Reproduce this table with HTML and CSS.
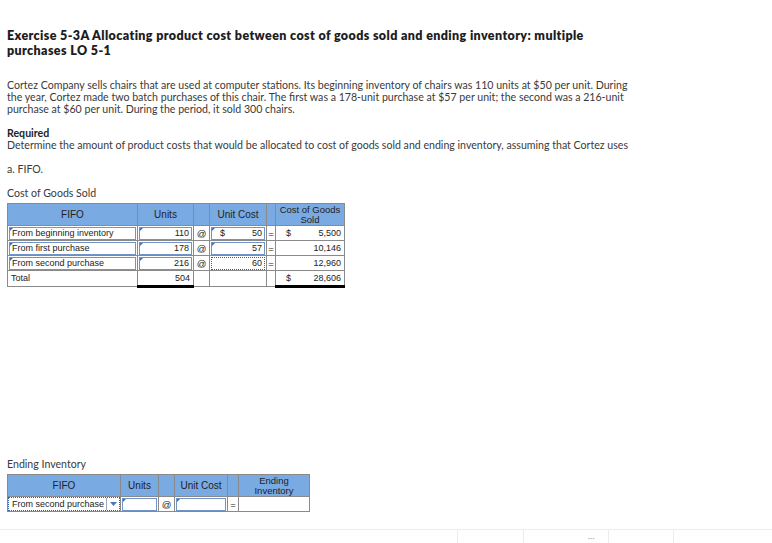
FILE: index.html
```html
<!DOCTYPE html>
<html>
<head>
<meta charset="utf-8">
<link rel="stylesheet" href="styles.css">
</head>
<body>
<div class="page">
  <h1 class="title">Exercise 5-3A Allocating product cost between cost of goods sold and ending inventory: multiple purchases LO 5-1</h1>
  <p class="para">Cortez Company sells chairs that are used at computer stations. Its beginning inventory of chairs was 110 units at $50 per unit. During the year, Cortez made two batch purchases of this chair. The first was a 178-unit purchase at $57 per unit; the second was a 216-unit purchase at $60 per unit. During the period, it sold 300 chairs.</p>
  <p class="req"><span class="req-h">Required</span><br>Determine the amount of product costs that would be allocated to cost of goods sold and ending inventory, assuming that Cortez uses</p>
  <p class="part">a. FIFO.</p>
  <p class="cap">Cost of Goods Sold</p>
  <table class="grid cogs">
    <colgroup><col style="width:130px"><col style="width:56px"><col style="width:16px"><col style="width:57px"><col style="width:9px"><col style="width:69px"></colgroup>
    <tr class="hd"><th>FIFO</th><th>Units</th><th></th><th>Unit Cost</th><th></th><th class="sm">Cost of Goods<br>Sold</th></tr>
    <tr><td><div class="inp l">From beginning inventory</div></td><td><div class="inp r">110</div></td><td class="c">@</td><td><div class="inp split"><span>$</span><span>50</span></div></td><td class="c">=</td><td class="split pl"><span>$</span><span>5,500</span></td></tr>
    <tr><td><div class="inp l">From first purchase</div></td><td><div class="inp r">178</div></td><td class="c">@</td><td><div class="inp r">57</div></td><td class="c">=</td><td class="r">10,146</td></tr>
    <tr><td><div class="inp l">From second purchase</div></td><td><div class="inp r">216</div></td><td class="c">@</td><td><div class="inp focus r">60</div></td><td class="c">=</td><td class="r">12,960</td></tr>
    <tr><td class="l plain">Total</td><td class="r tot">504</td><td></td><td></td><td></td><td class="split pl tot"><span>$</span><span>28,606</span></td></tr>
  </table>
  <p class="cap cap2">Ending Inventory</p>
  <table class="grid ending">
    <colgroup><col style="width:113px"><col style="width:38px"><col style="width:16px"><col style="width:53px"><col style="width:11px"><col style="width:71px"></colgroup>
    <tr class="hd"><th>FIFO</th><th>Units</th><th></th><th>Unit Cost</th><th></th><th class="sm">Ending<br>Inventory</th></tr>
    <tr><td><div class="sel"><span class="sel-t">From second purchase</span><span class="sel-b"><svg width="7" height="4" viewBox="0 0 7 4"><path d="M0 0H7L3.5 4Z" fill="#4a78c0"/></svg></span></div></td><td><div class="inp r"></div></td><td class="c">@</td><td><div class="inp r"></div></td><td class="c">=</td><td></td></tr>
  </table>
</div>
<div class="footer">
  <div class="fsp"></div>
  <div class="fcell w1"></div>
  <div class="fcell w2"></div>
  <div class="fcell w3"><span class="dots">···</span></div>
  <div class="fcell w4"></div>
  <div class="fcell w5"></div>
</div>
</body>
</html>
```
FILE: styles.css
```css
html, body { margin: 0; padding: 0; background: #fff; }
body { width: 772px; height: 543px; overflow: hidden; position: relative; font-family: "Lato", "Open Sans", sans-serif; color: #3a3a3a; }
.page { padding: 28px 7px 0 7px; }
.title { font-family: "Lato", sans-serif; font-weight: 800; font-size: 12.5px; line-height: 15px; color: #1d1d1d; margin: 0; width: 600px; letter-spacing: 0.38px; }
.para { font-size: 10.6px; line-height: 12px; margin: 21px 0 0 0; width: 636px; }
.req { font-size: 10.6px; line-height: 12px; margin: 12px 0 0 0; }
.req-h { font-weight: 700; color: #222; }
.part { font-size: 10.6px; line-height: 12px; margin: 12px 0 0 0; }
.cap { font-size: 10.6px; line-height: 12px; margin: 12px 0 0 0; }
.cap2 { margin-top: 170px; }

.grid { border-collapse: collapse; table-layout: fixed; margin-top: 4px; font-family: "Liberation Sans", Arial, sans-serif; font-size: 9px; color: #222; }
.grid td, .grid th { border: 1px solid #8a8a8a; padding: 0; height: 14px; vertical-align: middle; line-height: 11px; }
.grid th { background: #7aaae2; font-weight: normal; font-size: 10px; color: #222; text-align: center; height: 21px; line-height: 10px; }
.grid th.sm { font-size: 9.5px; }
.grid td.c { text-align: center; font-size: 9.5px; }
.grid td.r { text-align: right; padding-right: 3px; }
.grid td.l { text-align: left; padding-left: 3px; }
td.split span:first-child, .inp.split span:first-child { float: left; }
td.split span:last-child, .inp.split span:last-child { float: right; }
td.pl { padding-left: 10px; padding-right: 3px; }
.grid td.tot { border-top: 1px solid #000; border-bottom: 3px solid #000; }

.inp { position: relative; height: 11px; line-height: 11px; border: 1px solid #7094c8; background: #fff; margin: 0 1px; padding: 0 2px; white-space: nowrap; overflow: hidden; }
.inp::before { content: ""; position: absolute; left: 0; top: 0; width: 0; height: 0; border-top: 3px solid #3a6fc4; border-right: 3px solid transparent; }
.inp.l { text-align: left; }
.inp.r { text-align: right; }
.inp.split { padding-left: 4px; }
.inp.split span:first-child { padding-left: 4px; }
.inp.focus { border: 1px dotted #2d5fb4; }
.inp.focus::before { display: none; }

.ending td { height: 14px; }
.sel { display: flex; height: 12px; border: 1px dotted #2d5fb4; margin: 0; background: #fff; }
.sel-t { flex: 1; padding-left: 3px; line-height: 12px; white-space: nowrap; overflow: hidden; }
.sel-b { width: 12px; border-left: 1px solid #9ab; display: flex; align-items: center; justify-content: center; }

.footer { position: absolute; left: 0; right: 0; top: 529px; height: 14px; border-top: 1px solid #ececec; display: flex; }
.fsp { width: 459px; }
.fcell { border-left: 1px solid #ececec; position: relative; }
.w1 { width: 65px; }
.w2 { width: 84px; }
.w3 { width: 65px; }
.w4 { width: 98px; }
.w5 { flex: 1; border-left: none; }
.dots { position: absolute; left: -21px; top: 3px; font-size: 9px; color: #b0b0d0; line-height: 9px; }
```
